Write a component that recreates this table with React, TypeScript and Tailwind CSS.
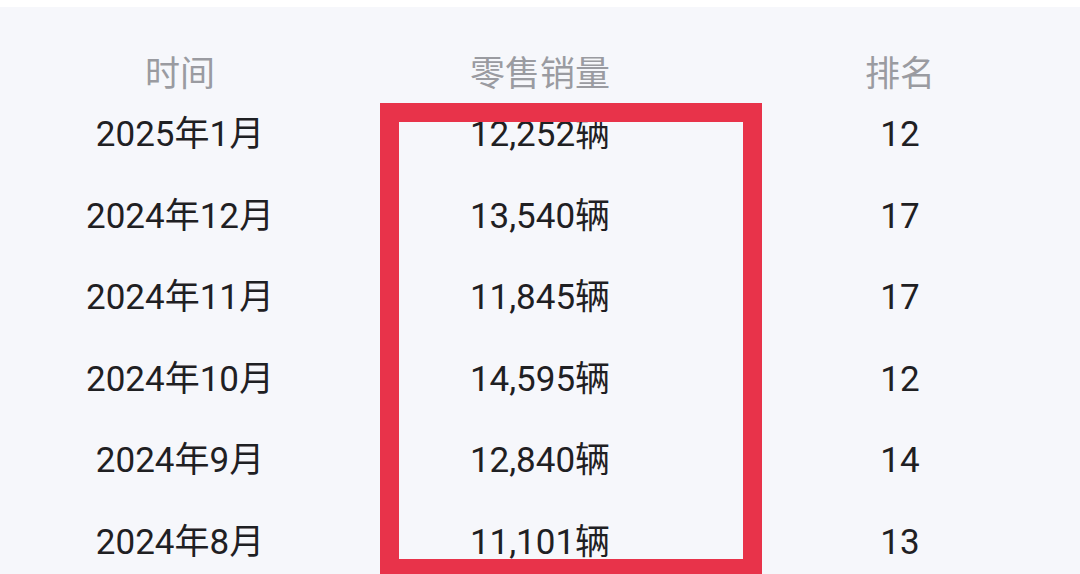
import React from 'react';

const rows = [
  { month: '2025年1月', sales: '12,252辆', rank: '12' },
  { month: '2024年12月', sales: '13,540辆', rank: '17' },
  { month: '2024年11月', sales: '11,845辆', rank: '17' },
  { month: '2024年10月', sales: '14,595辆', rank: '12' },
  { month: '2024年9月', sales: '12,840辆', rank: '14' },
  { month: '2024年8月', sales: '11,101辆', rank: '13' },
];

const font = { fontFamily: 'Roboto, "Noto Sans CJK SC", sans-serif' };

export default function App() {
  return (
    <div className="relative h-[574px] w-[1080px] overflow-hidden bg-white" style={font}>
      <div className="mt-[7px] h-[567px] bg-[#f6f7fb] pt-[47px]">
        <div className="grid h-[40px] grid-cols-3 items-center text-center text-[35px] leading-none text-[#9a9ba1]">
          <div>时间</div>
          <div>零售销量</div>
          <div>排名</div>
        </div>
        {rows.map((r) => (
          <div
            key={r.month}
            className="grid h-[81.5px] grid-cols-3 items-center text-center text-[35px] leading-none text-[#1f2023]"
          >
            <div>{r.month}</div>
            <div>{r.sales}</div>
            <div>{r.rank}</div>
          </div>
        ))}
      </div>

      {/* red highlight box */}
      <div className="pointer-events-none absolute left-[380px] top-[103px] h-[475px] w-[382px] border-[19px] border-[#e8334a]" />
    </div>
  );
}
